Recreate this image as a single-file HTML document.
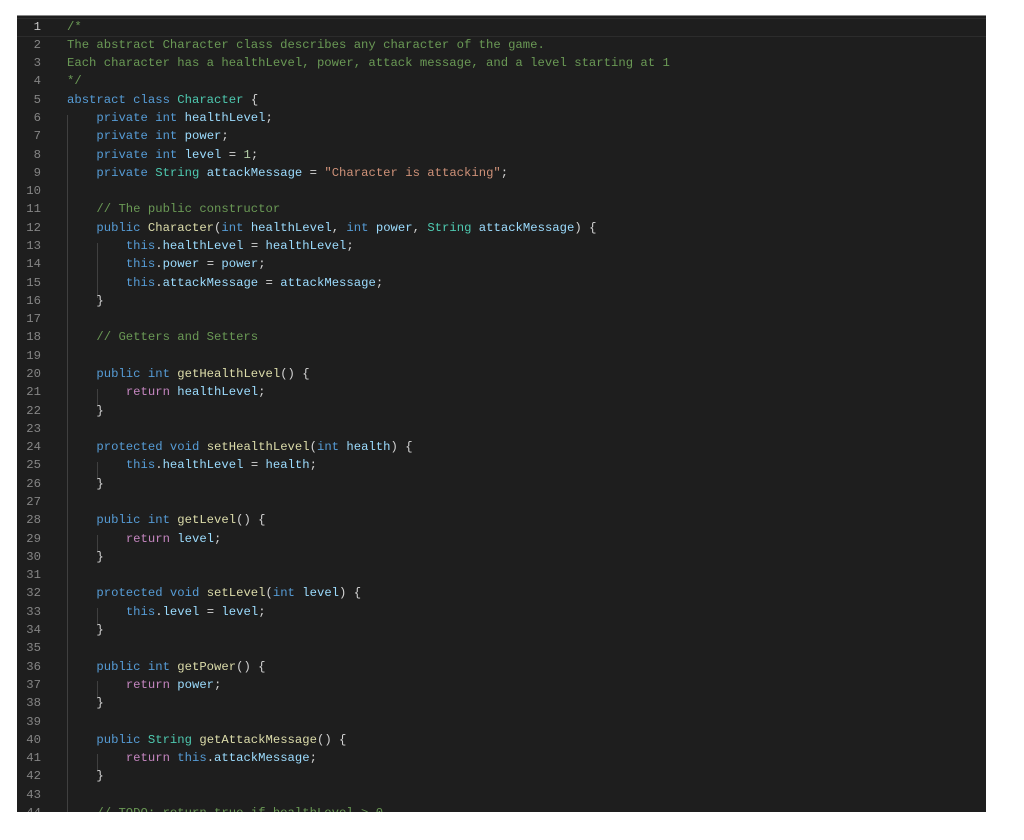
<!DOCTYPE html>
<html><head><meta charset="utf-8"><style>
body{margin:0;background:#fff;width:1024px;height:840px;overflow:hidden}
#ed{position:absolute;left:17px;top:15px;width:969px;height:797px;background:#1e1e1e;overflow:hidden;border-top:1px solid #888;box-sizing:border-box}
.hl{position:absolute;left:0;right:0;top:2px;height:17px;border-top:1px solid #2c2c2c;border-bottom:1px solid #2c2c2c}
.ln{position:absolute;left:0;width:24px;text-align:right;color:#858585}
.c{position:absolute;left:50px;white-space:pre}
.l{position:absolute;height:18.29px;line-height:18.29px;font:12.25px "Liberation Mono",monospace;left:0;right:0}
.g{position:absolute;width:1px;background:#404040}
.cm{color:#6a9955}.k{color:#569cd6}.t{color:#4ec9b0}.v{color:#9cdcfe}.f{color:#dcdcaa}.s{color:#ce9178}.r{color:#c586c0}.n{color:#b5cea8}.p{color:#d4d4d4}
#w{position:absolute;left:0;top:0;right:0;bottom:0}
</style></head><body><div id="ed"><div class="hl"></div>
<div class="g" style="left:50px;top:99px;height:700px"></div>
<div class="g" style="left:80px;top:227px;height:55px"></div>
<div class="g" style="left:80px;top:373px;height:18px"></div>
<div class="g" style="left:80px;top:446px;height:18px"></div>
<div class="g" style="left:80px;top:519px;height:18px"></div>
<div class="g" style="left:80px;top:592px;height:18px"></div>
<div class="g" style="left:80px;top:665px;height:18px"></div>
<div class="g" style="left:80px;top:738px;height:18px"></div>
<div id="w" style="top:3.5px">
<div class="l" style="top:0"><span class="ln" style="color:#c6c6c6">1</span><span class="c cm">/*</span></div>
<div class="l" style="top:18.29px"><span class="ln">2</span><span class="c cm">The abstract Character class describes any character of the game.</span></div>
<div class="l" style="top:36.58px"><span class="ln">3</span><span class="c cm">Each character has a healthLevel, power, attack message, and a level starting at 1</span></div>
<div class="l" style="top:54.87px"><span class="ln">4</span><span class="c cm">*/</span></div>
<div class="l" style="top:73.16px"><span class="ln">5</span><span class="c"><span class="k">abstract class</span> <span class="t">Character</span> <span class="p">{</span></span></div>
<div class="l" style="top:91.45px"><span class="ln">6</span><span class="c">    <span class="k">private int</span> <span class="v">healthLevel</span><span class="p">;</span></span></div>
<div class="l" style="top:109.74px"><span class="ln">7</span><span class="c">    <span class="k">private int</span> <span class="v">power</span><span class="p">;</span></span></div>
<div class="l" style="top:128.03px"><span class="ln">8</span><span class="c">    <span class="k">private int</span> <span class="v">level</span> <span class="p">=</span> <span class="n">1</span><span class="p">;</span></span></div>
<div class="l" style="top:146.32px"><span class="ln">9</span><span class="c">    <span class="k">private</span> <span class="t">String</span> <span class="v">attackMessage</span> <span class="p">=</span> <span class="s">"Character is attacking"</span><span class="p">;</span></span></div>
<div class="l" style="top:164.61px"><span class="ln">10</span></div>
<div class="l" style="top:182.9px"><span class="ln">11</span><span class="c">    <span class="cm">// The public constructor</span></span></div>
<div class="l" style="top:201.19px"><span class="ln">12</span><span class="c">    <span class="k">public</span> <span class="f">Character</span><span class="p">(</span><span class="k">int</span> <span class="v">healthLevel</span><span class="p">,</span> <span class="k">int</span> <span class="v">power</span><span class="p">,</span> <span class="t">String</span> <span class="v">attackMessage</span><span class="p">) {</span></span></div>
<div class="l" style="top:219.48px"><span class="ln">13</span><span class="c">        <span class="k">this</span><span class="p">.</span><span class="v">healthLevel</span> <span class="p">=</span> <span class="v">healthLevel</span><span class="p">;</span></span></div>
<div class="l" style="top:237.77px"><span class="ln">14</span><span class="c">        <span class="k">this</span><span class="p">.</span><span class="v">power</span> <span class="p">=</span> <span class="v">power</span><span class="p">;</span></span></div>
<div class="l" style="top:256.06px"><span class="ln">15</span><span class="c">        <span class="k">this</span><span class="p">.</span><span class="v">attackMessage</span> <span class="p">=</span> <span class="v">attackMessage</span><span class="p">;</span></span></div>
<div class="l" style="top:274.35px"><span class="ln">16</span><span class="c p">    }</span></div>
<div class="l" style="top:292.64px"><span class="ln">17</span></div>
<div class="l" style="top:310.93px"><span class="ln">18</span><span class="c">    <span class="cm">// Getters and Setters</span></span></div>
<div class="l" style="top:329.22px"><span class="ln">19</span></div>
<div class="l" style="top:347.51px"><span class="ln">20</span><span class="c">    <span class="k">public int</span> <span class="f">getHealthLevel</span><span class="p">() {</span></span></div>
<div class="l" style="top:365.8px"><span class="ln">21</span><span class="c">        <span class="r">return</span> <span class="v">healthLevel</span><span class="p">;</span></span></div>
<div class="l" style="top:384.09px"><span class="ln">22</span><span class="c p">    }</span></div>
<div class="l" style="top:402.38px"><span class="ln">23</span></div>
<div class="l" style="top:420.67px"><span class="ln">24</span><span class="c">    <span class="k">protected void</span> <span class="f">setHealthLevel</span><span class="p">(</span><span class="k">int</span> <span class="v">health</span><span class="p">) {</span></span></div>
<div class="l" style="top:438.96px"><span class="ln">25</span><span class="c">        <span class="k">this</span><span class="p">.</span><span class="v">healthLevel</span> <span class="p">=</span> <span class="v">health</span><span class="p">;</span></span></div>
<div class="l" style="top:457.25px"><span class="ln">26</span><span class="c p">    }</span></div>
<div class="l" style="top:475.54px"><span class="ln">27</span></div>
<div class="l" style="top:493.83px"><span class="ln">28</span><span class="c">    <span class="k">public int</span> <span class="f">getLevel</span><span class="p">() {</span></span></div>
<div class="l" style="top:512.12px"><span class="ln">29</span><span class="c">        <span class="r">return</span> <span class="v">level</span><span class="p">;</span></span></div>
<div class="l" style="top:530.41px"><span class="ln">30</span><span class="c p">    }</span></div>
<div class="l" style="top:548.7px"><span class="ln">31</span></div>
<div class="l" style="top:566.99px"><span class="ln">32</span><span class="c">    <span class="k">protected void</span> <span class="f">setLevel</span><span class="p">(</span><span class="k">int</span> <span class="v">level</span><span class="p">) {</span></span></div>
<div class="l" style="top:585.28px"><span class="ln">33</span><span class="c">        <span class="k">this</span><span class="p">.</span><span class="v">level</span> <span class="p">=</span> <span class="v">level</span><span class="p">;</span></span></div>
<div class="l" style="top:603.57px"><span class="ln">34</span><span class="c p">    }</span></div>
<div class="l" style="top:621.86px"><span class="ln">35</span></div>
<div class="l" style="top:640.15px"><span class="ln">36</span><span class="c">    <span class="k">public int</span> <span class="f">getPower</span><span class="p">() {</span></span></div>
<div class="l" style="top:658.44px"><span class="ln">37</span><span class="c">        <span class="r">return</span> <span class="v">power</span><span class="p">;</span></span></div>
<div class="l" style="top:676.73px"><span class="ln">38</span><span class="c p">    }</span></div>
<div class="l" style="top:695.02px"><span class="ln">39</span></div>
<div class="l" style="top:713.31px"><span class="ln">40</span><span class="c">    <span class="k">public</span> <span class="t">String</span> <span class="f">getAttackMessage</span><span class="p">() {</span></span></div>
<div class="l" style="top:731.6px"><span class="ln">41</span><span class="c">        <span class="r">return</span> <span class="k">this</span><span class="p">.</span><span class="v">attackMessage</span><span class="p">;</span></span></div>
<div class="l" style="top:749.89px"><span class="ln">42</span><span class="c p">    }</span></div>
<div class="l" style="top:768.18px"><span class="ln">43</span></div>
<div class="l" style="top:786.47px"><span class="ln">44</span><span class="c">    <span class="cm">// TODO: return true if healthLevel &gt; 0</span></span></div>
</div>
</div>
</body></html>
